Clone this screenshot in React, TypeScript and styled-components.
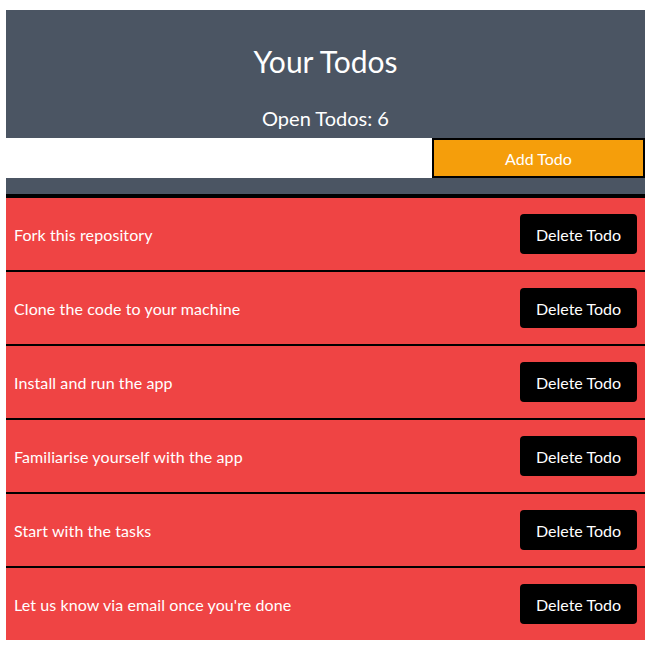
import styled, { createGlobalStyle } from 'styled-components'

const GlobalStyle = createGlobalStyle`
  body {
    margin: 0;
    background: #ffffff;
    font-family: Lato, "Noto Sans", sans-serif;
  }
`

const Page = styled.div`
  margin: 10px 9px 0 6px;
`

const Header = styled.header`
  background-color: #4b5563;
  color: #ffffff;
  padding-bottom: 16px;
  text-align: center;
`

const Title = styled.h1`
  margin: 0;
  padding-top: 31px;
  font-size: 30px;
  line-height: 40px;
  font-weight: 400;
`

const OpenCount = styled.p`
  margin: 23px 0 6px;
  font-size: 20px;
  line-height: 28px;
`

const Form = styled.form`
  display: grid;
  grid-template-columns: 2fr 1fr;
  height: 40px;
`

const Input = styled.input`
  border: none;
  outline: none;
  margin: 0;
  padding: 0 10px;
  font: inherit;
  font-size: 16px;
  background: #ffffff;
  min-width: 0;
`

const AddButton = styled.button`
  margin: 0;
  border: 2px solid #000000;
  background-color: #f59e0b;
  color: #ffffff;
  font-family: inherit;
  font-size: 16px;
  cursor: pointer;
`

const List = styled.ul`
  list-style: none;
  margin: 0;
  padding: 0;
  border-top: 2px solid #000000;
`

const Row = styled.li`
  display: flex;
  align-items: center;
  justify-content: space-between;
  height: 72px;
  padding: 0 8px;
  background-color: #ef4444;
  border-top: 2px solid #000000;
  color: #ffffff;
  font-size: 16px;
  letter-spacing: 0.1px;
`

const DeleteButton = styled.button`
  width: 117px;
  height: 40px;
  border: none;
  border-radius: 4px;
  background-color: #000000;
  color: #ffffff;
  font-family: inherit;
  font-size: 16px;
  cursor: pointer;
`

const todos = [
  'Fork this repository',
  'Clone the code to your machine',
  'Install and run the app',
  'Familiarise yourself with the app',
  'Start with the tasks',
  "Let us know via email once you're done",
]

export default function App() {
  return (
    <>
      <GlobalStyle />
      <Page>
        <Header>
          <Title>Your Todos</Title>
          <OpenCount>Open Todos: {todos.length}</OpenCount>
          <Form onSubmit={(e) => e.preventDefault()}>
            <Input />
            <AddButton type="submit">Add Todo</AddButton>
          </Form>
        </Header>
        <List>
          {todos.map((todo) => (
            <Row key={todo}>
              <span>{todo}</span>
              <DeleteButton>Delete Todo</DeleteButton>
            </Row>
          ))}
        </List>
      </Page>
    </>
  )
}
